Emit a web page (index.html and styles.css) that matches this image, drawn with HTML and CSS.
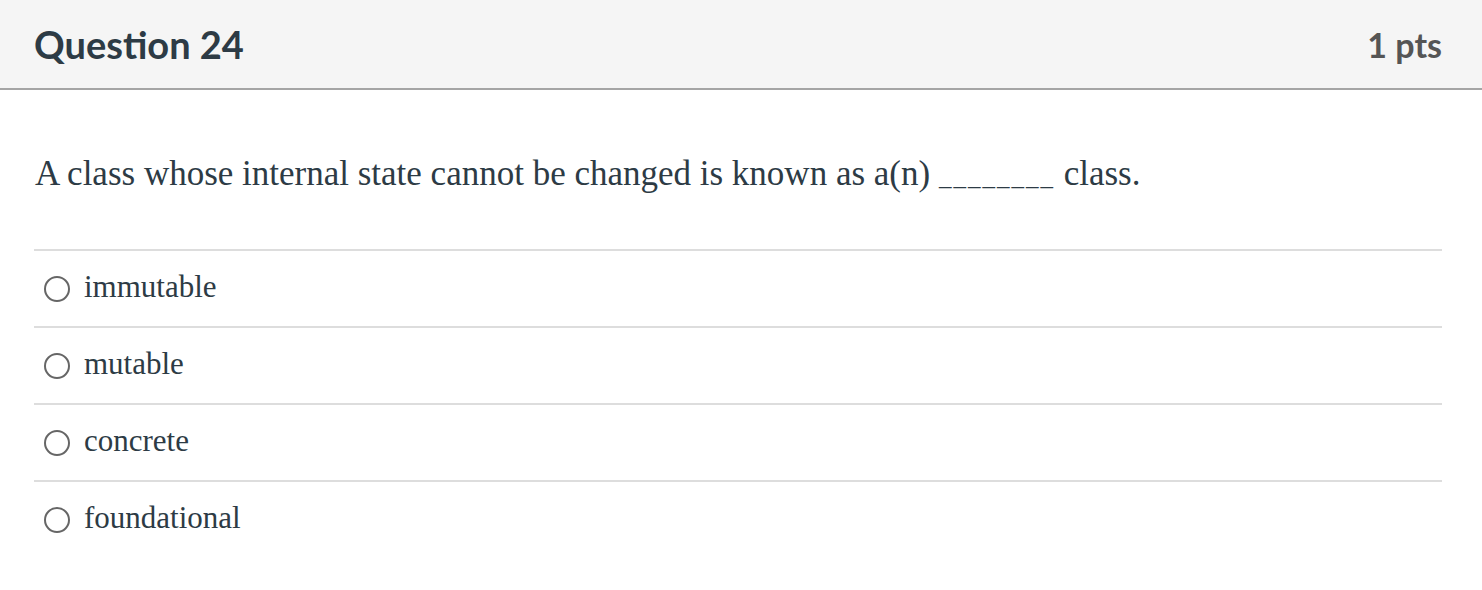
FILE: index.html
```html
<!DOCTYPE html>
<html>
<head>
<meta charset="utf-8">
<link rel="stylesheet" href="styles.css">
</head>
<body>
<div class="question">
  <div class="header">
    <h2 class="title">Question 24</h2>
    <div class="points">1 pts</div>
  </div>
  <div class="content">
    <p class="text">A class whose internal state cannot be changed is known as a(n) <span class="blank">________</span> class.</p>
    <div class="answers">
      <label class="answer"><span class="radio"></span><span class="label">immutable</span></label>
      <label class="answer"><span class="radio"></span><span class="label">mutable</span></label>
      <label class="answer"><span class="radio"></span><span class="label">concrete</span></label>
      <label class="answer"><span class="radio"></span><span class="label">foundational</span></label>
    </div>
  </div>
</div>
</body>
</html>
```

FILE: styles.css
```css
html, body {
  margin: 0;
  padding: 0;
  background: #fff;
}
.question {
  width: 1482px;
}
.header {
  display: flex;
  justify-content: space-between;
  align-items: center;
  height: 88px;
  background: #f5f5f5;
  border-bottom: 2px solid #a5a5a5;
  padding: 0 40px 0 34px;
  box-sizing: content-box;
}
.title {
  margin: 0;
  font-family: Lato, "Liberation Sans", sans-serif;
  font-weight: 700;
  font-size: 38px;
  color: #2d3b45;
}
.points {
  font-family: Lato, "Liberation Sans", sans-serif;
  font-weight: 700;
  font-size: 34px;
  color: #555;
}
.content {
  padding: 0 40px 0 34px;
}
.text {
  margin: 0;
  padding: 64px 0 0 1px;
  height: 95px;
  box-sizing: content-box;
  font-family: "Liberation Serif", "Times New Roman", serif;
  font-size: 35px;
  line-height: 40px;
  color: #2d3b45;
}
.blank {
  font-size: 25px;
  letter-spacing: 2px;
}
.answers {
  border-top: 2px solid #ddd;
}
.answer {
  display: flex;
  align-items: center;
  height: 75px;
  border-bottom: 2px solid #ddd;
  font-family: "Liberation Serif", "Times New Roman", serif;
  font-size: 31px;
  color: #2d3b45;
}
.answer:last-child {
  border-bottom: none;
}
.label {
  position: relative;
  top: -2px;
}
.radio {
  width: 22px;
  height: 22px;
  border: 2px solid #666;
  border-radius: 50%;
  margin: 0 14px 0 10px;
  flex: none;
}
```
